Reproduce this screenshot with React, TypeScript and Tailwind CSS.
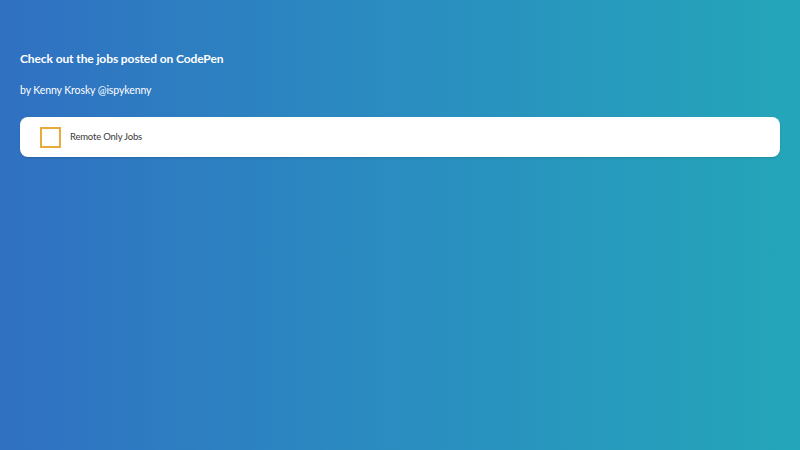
import React from "react";

export default function App() {
  return (
    <div
      className="w-[800px] h-[450px] bg-gradient-to-r from-[#3070c2] via-[#2a8dc0] to-[#24a6b9] px-5 pt-[51px]"
      style={{ fontFamily: 'Lato, "Noto Sans", sans-serif' }}
    >
      <h1 className="text-white font-bold text-[12px] leading-[16px] tracking-[-0.1px]">
        Check out the jobs posted on CodePen
      </h1>
      <p className="text-white text-[10.5px] leading-[15px] mt-[16px] tracking-[-0.1px]">by Kenny Krosky @ispykenny</p>
      <div className="mt-[19px] h-[40px] bg-white rounded-[8px] shadow-[0_1px_2px_rgba(0,0,0,0.15)] flex items-center pl-5">
        <div className="w-[21px] h-[21px] border-2 border-[#e9aa3c] box-border" />
        <span className="ml-[9px] text-[9.5px] text-[#3a3a3a] leading-[14px] tracking-[-0.2px]">Remote Only Jobs</span>
      </div>
    </div>
  );
}
